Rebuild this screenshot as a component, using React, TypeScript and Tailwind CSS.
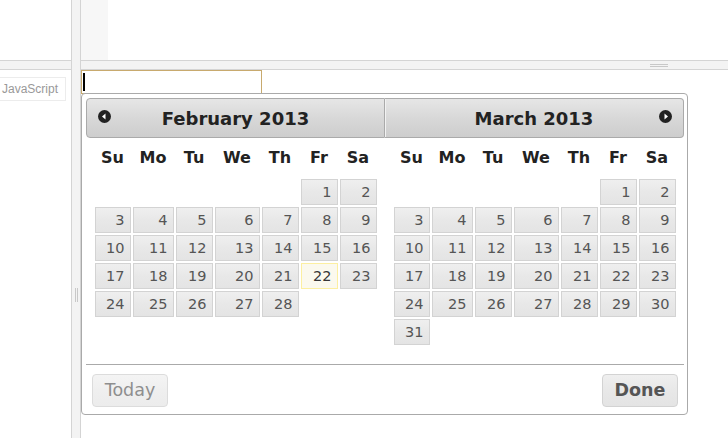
import React from 'react'

const DAY_NAMES = ['Su', 'Mo', 'Tu', 'We', 'Th', 'Fr', 'Sa']

type Month = { title: string; startDay: number; days: number }

const MONTHS: Month[] = [
  { title: 'February 2013', startDay: 5, days: 28 },
  { title: 'March 2013', startDay: 5, days: 31 },
]

const SELECTED = { month: 0, day: 22 }

function NavIcon({ dir }: { dir: 'prev' | 'next' }) {
  return (
    <svg width="13" height="13" viewBox="0 0 13 13" className="block">
      <circle cx="6.5" cy="6.5" r="6.5" fill="#222" />
      {dir === 'prev' ? (
        <path d="M4 6.5 L7.5 3.5 L7.5 9.5 Z" fill="#fff" />
      ) : (
        <path d="M9 6.5 L5.5 3.5 L5.5 9.5 Z" fill="#fff" />
      )}
    </svg>
  )
}

function MonthGroup({ month, index }: { month: Month; index: number }) {
  const cells: (number | null)[] = []
  for (let i = 0; i < month.startDay; i++) cells.push(null)
  for (let d = 1; d <= month.days; d++) cells.push(d)

  const first = index === 0
  return (
    <div className="w-[299px]">
      <div
        className={
          first
            ? 'relative flex h-[40px] items-center justify-center rounded-l-[4px] border border-[#aaa] bg-[linear-gradient(#e6e6e6,#d8d8d8_50%,#cdcdcd)]'
            : 'relative flex h-[40px] items-center justify-center rounded-r-[4px] border border-l-0 border-[#aaa] bg-[linear-gradient(#e6e6e6,#d8d8d8_50%,#cdcdcd)] shadow-[inset_1px_0_0_#f2f2f2]'
        }
      >
        {first ? (
          <span className="absolute left-[11px] top-[11px]">
            <NavIcon dir="prev" />
          </span>
        ) : (
          <span className="absolute right-[11px] top-[11px]">
            <NavIcon dir="next" />
          </span>
        )}
        <span className="text-[18px] font-bold text-[#222]">{month.title}</span>
      </div>

      <div className="mx-auto grid w-[284px] grid-cols-[38px_43px_39px_47px_39px_39px_39px]">
        {DAY_NAMES.map((n) => (
          <div key={n} className="flex h-[40px] items-center justify-center text-[16px] font-bold text-[#222]">
            {n}
          </div>
        ))}
        {cells.map((d, i) => (
          <div key={i} className="p-[1px]">
            {d === null ? (
              <div className="h-[26px]" />
            ) : SELECTED.month === index && SELECTED.day === d ? (
              <div className="h-[26px] border border-[#fcefa1] bg-[#fbf9ee] pr-[5px] text-right text-[14.5px] leading-[24px] text-[#363636]">
                {d}
              </div>
            ) : (
              <div className="h-[26px] border border-[#d3d3d3] bg-[linear-gradient(#efefef,#e8e8e8_50%,#e4e4e4)] pr-[5px] text-right text-[14.5px] leading-[24px] text-[#555]">
                {d}
              </div>
            )}
          </div>
        ))}
      </div>
    </div>
  )
}

export default function App() {
  return (
    <div className="relative h-[438px] w-[728px] overflow-hidden bg-white font-['DejaVu_Sans',sans-serif]">
      <div className="grid h-full grid-cols-[71px_1px_8px_1px_1fr] grid-rows-[60px_1px_8px_1px_1fr] bg-[#f3f3f3]">
        {/* top left panel */}
        <div className="bg-white" />
        <div className="row-span-5 bg-[#d4d4d4]" />
        <div className="row-span-5 flex flex-col items-center">
          <div className="mt-[288px] flex gap-[1px]">
            <div className="h-[14px] w-[1px] bg-[#c8c8c8]" />
            <div className="h-[14px] w-[1px] bg-[#c8c8c8]" />
          </div>
        </div>
        <div className="row-span-5 bg-[#d4d4d4]" />
        {/* top right panel: editor */}
        <div className="flex bg-white">
          <div className="w-[27px] bg-[#f7f7f7]" />
        </div>

        <div className="bg-[#d4d4d4]" />
        <div className="bg-[#d4d4d4]" />

        <div className="bg-[#f3f3f3]" />
        <div className="flex items-center justify-end pr-[60px]">
          <div className="flex flex-col gap-[1px]">
            <div className="h-[1px] w-[18px] bg-[#c8c8c8]" />
            <div className="h-[1px] w-[18px] bg-[#c8c8c8]" />
          </div>
        </div>

        <div className="bg-[#d4d4d4]" />
        <div className="bg-[#d4d4d4]" />

        {/* bottom left panel */}
        <div className="bg-white pt-[7px]">
          <div className="flex h-[24px] w-[66px] items-center border border-l-0 border-[#ececec] pl-[2px] font-['Liberation_Sans',sans-serif] text-[12px] text-[#999]">
            JavaScript
          </div>
        </div>

        {/* bottom right panel: result */}
        <div className="relative bg-white">
          <div className="relative h-[24px] w-[181px] border border-[#c8aa6e] bg-white">
            <div className="absolute left-[1px] top-[2px] h-[18px] w-[2px] bg-black" />
          </div>

          <div className="absolute left-0 top-[23px] w-[607px] rounded-[4px] border border-[#aaa] bg-white pb-[7px] pl-[4px] pr-[3px] pt-[4px] text-[#222]">
            <div className="flex">
              {MONTHS.map((m, i) => (
                <MonthGroup key={m.title} month={m} index={i} />
              ))}
            </div>
            <div className="mt-[18px] flex justify-between border-t border-[#aaa] px-[6px] pt-[9px]">
              <button className="h-[33px] w-[76px] rounded-[4px] border border-[#dcdcdc] bg-[linear-gradient(#f4f4f4,#efefef_50%,#ececec)] text-[17.5px] text-[#8e8e8e]">
                Today
              </button>
              <button className="h-[33px] w-[76px] rounded-[4px] border border-[#d3d3d3] bg-[linear-gradient(#efefef,#e8e8e8_50%,#e4e4e4)] text-[17.5px] font-bold text-[#555]">
                Done
              </button>
            </div>
          </div>
        </div>
      </div>
    </div>
  )
}
